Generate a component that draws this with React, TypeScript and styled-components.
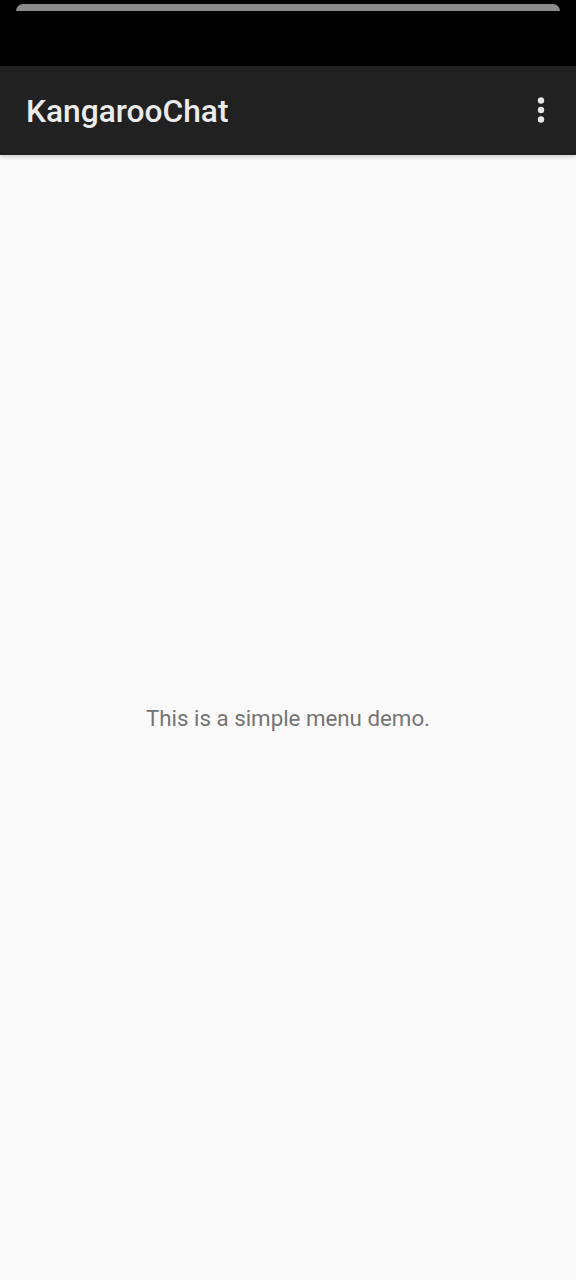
import styled, { createGlobalStyle } from 'styled-components';

const GlobalStyle = createGlobalStyle`
  html, body {
    margin: 0;
    padding: 0;
    background: #fafafa;
  }
  body {
    font-family: Roboto, "Liberation Sans", sans-serif;
  }
`;

const Screen = styled.div`
  display: flex;
  flex-direction: column;
  width: 576px;
  height: 1280px;
  overflow: hidden;
  background: #fafafa;
`;

const StatusBar = styled.div`
  height: 66px;
  background: #000;
  padding: 4px 16px 0;
  box-sizing: border-box;
  flex-shrink: 0;
`;

const Notch = styled.div`
  height: 7px;
  background: #8a8a8a;
  border-radius: 12px 12px 0 0;
`;

const Toolbar = styled.header`
  display: flex;
  align-items: center;
  justify-content: space-between;
  height: 89px;
  padding: 0 21px 0 26px;
  background: #212121;
  box-shadow: 0 2px 4px rgba(0, 0, 0, 0.18);
  flex-shrink: 0;
  position: relative;
  z-index: 1;
`;

const Title = styled.h1`
  margin: 0;
  font-size: 31.7px;
  line-height: 40px;
  font-weight: 500;
  color: #ececec;
  padding-top: 2px;
`;

const MenuButton = styled.button`
  display: flex;
  align-items: center;
  justify-content: center;
  width: 28px;
  height: 48px;
  padding: 0;
  margin-top: -2px;
  border: none;
  background: transparent;
`;

const Content = styled.main`
  flex: 1;
  display: flex;
  align-items: center;
  justify-content: center;
`;

const Message = styled.p`
  margin: 0;
  font-size: 22.3px;
  color: #757575;
`;

function MoreIcon() {
  return (
    <svg width="8" height="28" viewBox="0 0 8 28">
      <circle cx="4" cy="4.5" r="3.2" fill="#e6e6e6" />
      <circle cx="4" cy="14" r="3.2" fill="#e6e6e6" />
      <circle cx="4" cy="23.5" r="3.2" fill="#e6e6e6" />
    </svg>
  );
}

export default function App() {
  return (
    <>
      <GlobalStyle />
      <Screen>
        <StatusBar>
          <Notch />
        </StatusBar>
        <Toolbar>
          <Title>KangarooChat</Title>
          <MenuButton aria-label="More options">
            <MoreIcon />
          </MenuButton>
        </Toolbar>
        <Content>
          <Message>This is a simple menu demo.</Message>
        </Content>
      </Screen>
    </>
  );
}
